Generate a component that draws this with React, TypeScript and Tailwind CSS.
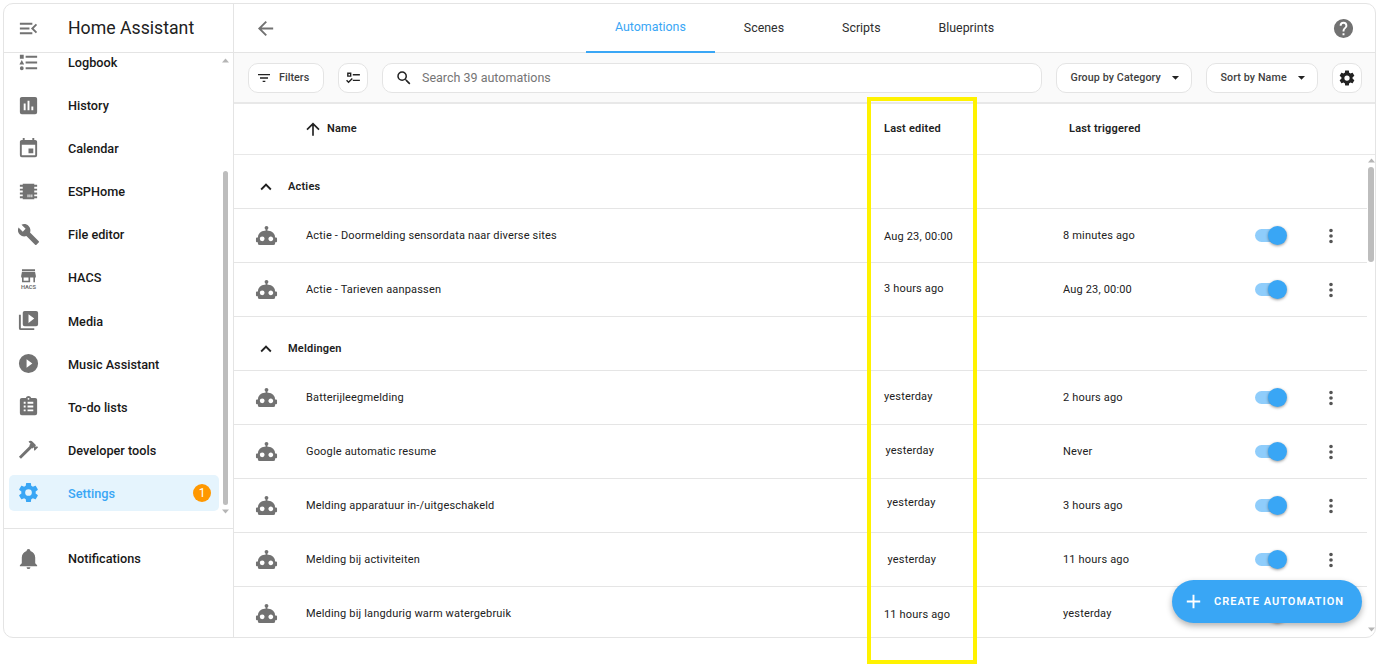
const mdi = {
  menuOpen: "M21,15.61L19.59,17L14.58,12L19.59,7L21,8.39L17.44,12L21,15.61M3,6H16V8H3V6M3,13V11H13V13H3M3,18V16H16V18H3Z",
  logbook: "M5,9.5L7.5,14H2.5L5,9.5M3,4H7V8H3V4M5,20A2,2 0 0,0 7,18A2,2 0 0,0 5,16A2,2 0 0,0 3,18A2,2 0 0,0 5,20M9,5V7H21V5H9M9,19H21V17H9V19M9,13H21V11H9V13Z",
  history: "M9 17H7V10H9V17M13 17H11V7H13V17M17 17H15V13H17V17M19 3H5C3.89 3 3 3.89 3 5V19A2 2 0 0 0 5 21H19A2 2 0 0 0 21 19V5A2 2 0 0 0 19 3Z",
  calendar: "M19,19H5V8H19M16,1V3H8V1H6V3H5C3.89,3 3,3.89 3,5V19A2,2 0 0,0 5,21H19A2,2 0 0,0 21,19V5C21,3.89 20.1,3 19,3H18V1M17,12H12V17H17V12Z",
  chip: "M6,4H18V5H21V7H18V9H21V11H18V13H21V15H18V17H21V19H18V20H6V19H3V17H6V15H3V13H6V11H3V9H6V7H3V5H6V4M11,15V18H12V15H11M13,15V18H14V15H13M15,15V18H16V15H15Z",
  wrench: "M22.7,19L13.6,9.9C14.5,7.6 14,4.9 12.1,3C10.1,1 7.1,0.6 4.7,1.7L9,6L6,9L1.6,4.7C0.4,7.1 0.9,10.1 2.9,12.1C4.8,14 7.5,14.5 9.8,13.6L18.9,22.7C19.3,23.1 19.9,23.1 20.3,22.7L22.6,20.4C23.1,20 23.1,19.3 22.7,19Z",
  store: "M12,18H6V14H12M21,14V12L20,7H4L3,12V14H4V20H14V14H18V20H20V14M20,4H4V6H20V4Z",
  media: "M4,6H2V20A2,2 0 0,0 4,22H18V20H4V6M20,2H8A2,2 0 0,0 6,4V16A2,2 0 0,0 8,18H20A2,2 0 0,0 22,16V4A2,2 0 0,0 20,2M12,14.5V5.5L18,10L12,14.5Z",
  play: "M10,16.5V7.5L16,12M12,2A10,10 0 0,0 2,12A10,10 0 0,0 12,22A10,10 0 0,0 22,12A10,10 0 0,0 12,2Z",
  todo: "M19,3H14.82C14.4,1.84 13.3,1 12,1C10.7,1 9.6,1.84 9.18,3H5A2,2 0 0,0 3,5V19A2,2 0 0,0 5,21H19A2,2 0 0,0 21,19V5A2,2 0 0,0 19,3M7,7H9V9H7V7M7,11H9V13H7V11M7,15H9V17H7V15M17,17H11V15H17V17M17,13H11V11H17V13M17,9H11V7H17V9M12,3A1,1 0 0,1 13,4A1,1 0 0,1 12,5A1,1 0 0,1 11,4A1,1 0 0,1 12,3Z",
  hammer: "M2 19.63L13.43 8.2L12.72 7.5L14.14 6.07L12 3.89C13.2 2.7 15.09 2.7 16.27 3.89L19.87 7.5L18.45 8.91H21.29L22 9.62L18.45 13.21L17.74 12.5V9.62L16.27 11.04L15.56 10.33L4.13 21.76L2 19.63Z",
  cog: "M12,15.5A3.5,3.5 0 0,1 8.5,12A3.5,3.5 0 0,1 12,8.5A3.5,3.5 0 0,1 15.5,12A3.5,3.5 0 0,1 12,15.5M19.43,12.97C19.47,12.65 19.5,12.33 19.5,12C19.5,11.67 19.47,11.34 19.43,11L21.54,9.37C21.73,9.22 21.78,8.95 21.66,8.73L19.66,5.27C19.54,5.05 19.27,4.96 19.05,5.05L16.56,6.05C16.04,5.66 15.5,5.32 14.87,5.07L14.5,2.42C14.46,2.18 14.25,2 14,2H10C9.75,2 9.54,2.18 9.5,2.42L9.13,5.07C8.5,5.32 7.96,5.66 7.44,6.05L4.95,5.05C4.73,4.96 4.46,5.05 4.34,5.27L2.34,8.73C2.21,8.95 2.27,9.22 2.46,9.37L4.57,11C4.53,11.34 4.5,11.67 4.5,12C4.5,12.33 4.53,12.65 4.57,12.97L2.46,14.63C2.27,14.78 2.21,15.05 2.34,15.27L4.34,18.73C4.46,18.95 4.73,19.03 4.95,18.95L7.44,17.94C7.96,18.34 8.5,18.68 9.13,18.93L9.5,21.58C9.54,21.82 9.75,22 10,22H14C14.25,22 14.46,21.82 14.5,21.58L14.87,18.93C15.5,18.67 16.04,18.34 16.56,17.94L19.05,18.95C19.27,19.03 19.54,18.95 19.66,18.73L21.66,15.27C21.78,15.05 21.73,14.78 21.54,14.63L19.43,12.97Z",
  bell: "M21,19V20H3V19L5,17V11C5,7.9 7.03,5.17 10,4.29C10,4.19 10,4.1 10,4A2,2 0 0,1 12,2A2,2 0 0,1 14,4C14,4.1 14,4.19 14,4.29C16.97,5.17 19,7.9 19,11V17L21,19M14,21A2,2 0 0,1 12,23A2,2 0 0,1 10,21",
  arrowLeft: "M20,11V13H8L13.5,18.5L12.08,19.92L4.16,12L12.08,4.08L13.5,5.5L8,11H20Z",
  help: "M15.07,11.25L14.17,12.17C13.45,12.89 13,13.5 13,15H11V14.5C11,13.39 11.45,12.39 12.17,11.67L13.41,10.41C13.78,10.05 14,9.55 14,9C14,7.89 13.1,7 12,7A2,2 0 0,0 10,9H8A4,4 0 0,1 12,5A4,4 0 0,1 16,9C16,9.88 15.64,10.67 15.07,11.25M13,19H11V17H13M12,2A10,10 0 0,0 2,12A10,10 0 0,0 12,22A10,10 0 0,0 22,12C22,6.47 17.5,2 12,2Z",
  filter: "M6,13H18V11H6M3,6V8H21V6M10,18H14V16H10V18Z",
  checks: "M3,5H9V11H3V5M5,7V9H7V7H5M11,7H21V9H11V7M11,15H21V17H11V15M5,20L1.5,16.5L2.91,15.09L5,17.17L9.59,12.59L11,14L5,20Z",
  search: "M9.5,3A6.5,6.5 0 0,1 16,9.5C16,11.11 15.41,12.59 14.44,13.73L14.71,14H15.5L20.5,19L19,20.5L14,15.5V14.71L13.73,14.44C12.59,15.41 11.11,16 9.5,16A6.5,6.5 0 0,1 3,9.5A6.5,6.5 0 0,1 9.5,3M9.5,5C7,5 5,7 5,9.5C5,12 7,14 9.5,14C12,14 14,12 14,9.5C14,7 12,5 9.5,5Z",
  caret: "M7,10L12,15L17,10H7Z",
  arrowUp: "M13,20H11V8L5.5,13.5L4.08,12.08L12,4.16L19.92,12.08L18.5,13.5L13,8V20Z",
  chevronUp: "M7.41,15.41L12,10.83L16.59,15.41L18,14L12,8L6,14L7.41,15.41Z",
  dots: "M12,16A2,2 0 0,1 14,18A2,2 0 0,1 12,20A2,2 0 0,1 10,18A2,2 0 0,1 12,16M12,10A2,2 0 0,1 14,12A2,2 0 0,1 12,14A2,2 0 0,1 10,12A2,2 0 0,1 12,10M12,4A2,2 0 0,1 14,6A2,2 0 0,1 12,8A2,2 0 0,1 10,6A2,2 0 0,1 12,4Z",
  plus: "M19,13H13V19H11V13H5V11H11V5H13V11H19V13Z",
  robot: "M12,2A2,2 0 0,1 14,4C14,4.74 13.6,5.39 13,5.73V7H14A7,7 0 0,1 21,14H22A1,1 0 0,1 23,15V18A1,1 0 0,1 22,19H21V20A2,2 0 0,1 19,22H5A2,2 0 0,1 3,20V19H2A1,1 0 0,1 1,18V15A1,1 0 0,1 2,14H3A7,7 0 0,1 10,7H11V5.73C10.4,5.39 10,4.74 10,4A2,2 0 0,1 12,2M7.5,13A2.5,2.5 0 0,0 5,15.5A2.5,2.5 0 0,0 7.5,18A2.5,2.5 0 0,0 10,15.5A2.5,2.5 0 0,0 7.5,13M16.5,13C15.12,13 14,14.12 14,15.5C14,16.88 15.12,18 16.5,18C17.88,18 19,16.88 19,15.5C19,14.12 17.88,13 16.5,13Z",
};

const Icon = ({ d, className }: { d: string; className: string }) => (
  <svg viewBox="0 0 24 24" fill="currentColor" className={`shrink-0 ${className}`}>
    <path d={d} fillRule="evenodd" />
  </svg>
);

const HacsIcon = () => (
  <svg viewBox="0 0 24 24" fill="currentColor" className="w-[23px] h-[23px] shrink-0 text-[#727272]">
    <path d={mdi.store} transform="translate(1.8 0) scale(0.85)" />
    <text x="12" y="23.5" textAnchor="middle" fontSize="6" fontWeight="700" fontFamily="Roboto, sans-serif">
      HACS
    </text>
  </svg>
);

const navItems = [
  { label: "Logbook", icon: mdi.logbook },
  { label: "History", icon: mdi.history },
  { label: "Calendar", icon: mdi.calendar },
  { label: "ESPHome", icon: mdi.chip },
  { label: "File editor", icon: mdi.wrench },
  { label: "HACS", icon: "" },
  { label: "Media", icon: mdi.media },
  { label: "Music Assistant", icon: mdi.play },
  { label: "To-do lists", icon: mdi.todo },
  { label: "Developer tools", icon: mdi.hammer },
];

type Row =
  | { group: string }
  | { name: string; edited: string; editedClass: string; triggered: string };

const rows: Row[] = [
  { group: "Acties" },
  { name: "Actie - Doormelding sensordata naar diverse sites", edited: "Aug 23, 00:00", editedClass: "pt-[4px]", triggered: "8 minutes ago" },
  { name: "Actie - Tarieven aanpassen", edited: "3 hours ago", editedClass: "", triggered: "Aug 23, 00:00" },
  { group: "Meldingen" },
  { name: "Batterijleegmelding", edited: "yesterday", editedClass: "", triggered: "2 hours ago" },
  { name: "Google automatic resume", edited: "yesterday", editedClass: "pl-[1.5px]", triggered: "Never" },
  { name: "Melding apparatuur in-/uitgeschakeld", edited: "yesterday", editedClass: "pl-[3px] pb-[4px]", triggered: "3 hours ago" },
  { name: "Melding bij activiteiten", edited: "yesterday", editedClass: "pl-[3.5px] pt-[2px]", triggered: "11 hours ago" },
  { name: "Melding bij langdurig warm watergebruik", edited: "11 hours ago", editedClass: "pt-[4px]", triggered: "yesterday" },
];

const ScrollArrow = ({ down }: { down?: boolean }) => (
  <svg viewBox="0 0 10 6" fill="currentColor" className={`w-[7px] h-[5px] shrink-0 text-[#b5b5b5] ${down ? "rotate-180" : ""}`}>
    <path d="M5 0L10 6H0Z" />
  </svg>
);

const ToolButton = ({ label, w }: { label: string; w: string }) => (
  <div className={`h-[30px] ${w} shrink-0 flex items-center pl-[13.5px] rounded-[10px] border border-[#e4e4e4] bg-white text-[10.7px] text-[#3f3f3f] font-medium tracking-[0.1px]`}>
    <span className="flex-1 pt-[2px]">{label}</span>
    <Icon d={mdi.caret} className="w-[17px] h-[17px] mr-[7px] text-[#222]" />
  </div>
);

const NavItem = ({ label, icon }: { label: string; icon: string }) => (
  <div className="h-[36px] flex items-center pl-[8px] gap-[28px] text-[12.7px] [font-weight:480] text-[#181818]">
    {icon ? <Icon d={icon} className="w-[23px] h-[23px] text-[#727272]" /> : <HacsIcon />}
    <span className="pt-[1px]">{label}</span>
  </div>
);

const Sidebar = () => (
  <aside className="w-[230px] shrink-0 flex flex-col border-r border-[#e4e4e4]">
    <div className="h-[49px] shrink-0 flex items-center pl-[13px] gap-[28px] border-b border-[#e4e4e4]">
      <Icon d={mdi.menuOpen} className="w-[23px] h-[23px] text-[#727272]" />
      <span className="text-[17.7px] text-[#212121]">Home Assistant</span>
    </div>
    <div className="h-[476px] shrink-0 flex border-b border-[#e4e4e4] overflow-hidden">
      <div className="w-[215px] shrink-0 pl-[5px]">
        <div className="-mt-[9px] flex flex-col gap-[7.1px]">
          {navItems.map((item) => (
            <NavItem key={item.label} {...item} />
          ))}
          <div className="h-[36px] flex items-center pl-[8px] pr-[8px] gap-[28px] rounded-[5px] bg-[#e5f4fd] text-[12.7px] [font-weight:480] text-[#39a6f5]">
            <Icon d={mdi.cog} className="w-[23px] h-[23px]" />
            <span className="flex-1 pt-[1px]">Settings</span>
            <span className="w-[18px] h-[18px] rounded-full bg-[#ff9800] text-white text-[12px] font-normal flex items-center justify-center">1</span>
          </div>
        </div>
      </div>
      <div className="flex-1 flex flex-col items-center pt-[5px] pr-[1px]">
        <ScrollArrow />
        <div className="w-[5px] h-[334px] mt-[108px] rounded-full bg-[#bdbdbd]" />
        <div className="mt-[4px]">
          <ScrollArrow down />
        </div>
      </div>
    </div>
    <div className="pt-[11px] pl-[5px] text-[#181818]">
      <div className="h-[36px] flex items-center pl-[8px] gap-[28px] text-[12.7px] [font-weight:480]">
        <Icon d={mdi.bell} className="w-[23px] h-[23px] text-[#727272]" />
        <span className="pt-[1px]">Notifications</span>
      </div>
    </div>
  </aside>
);

const Toggle = () => (
  <div className="w-[32px] h-[19px] flex items-center relative">
    <div className="w-[28px] h-[13px] rounded-full bg-[#8fcdfb]" />
    <div className="absolute right-0 top-0 w-[19px] h-[19px] rounded-full bg-[#39a6f5] shadow-[0_1px_3px_rgba(0,0,0,0.4)]" />
  </div>
);

const TableRows = () => (
  <div className="flex-1 min-w-0">
    {rows.map((row) =>
      "group" in row ? (
        <div key={row.group} className="h-[54px] flex items-center pt-[11px] pl-[21px] gap-[11px] border-b border-[#e5e5e5] text-[11px] font-semibold tracking-[0.2px] text-[#212121]">
          <Icon d={mdi.chevronUp} className="w-[22px] h-[22px] text-[#222]" />
          <span className="pt-[1px]">{row.group}</span>
        </div>
      ) : (
        <div key={row.name} className="h-[54px] grid grid-cols-[72px_578px_179px_192px_1fr] items-center border-b border-[#e5e5e5] text-[11px] tracking-[0.17px] text-[#212121]">
          <div className="pl-[21px]">
            <Icon d={mdi.robot} className="w-[23px] h-[23px] text-[#727272]" />
          </div>
          <span className="pt-[2px]">{row.name}</span>
          <span className={row.editedClass}>{row.edited}</span>
          <span className="pt-[2px]">{row.triggered}</span>
          <div className="flex items-center">
            <Toggle />
            <Icon d={mdi.dots} className="w-[22px] h-[22px] ml-[33px] text-[#555]" />
          </div>
        </div>
      )
    )}
  </div>
);

const Main = () => (
  <main className="flex-1 min-w-0 flex flex-col">
    <div className="h-[49px] shrink-0 flex items-center pl-[20px] pr-[20px] border-b border-[#e4e4e4]">
      <Icon d={mdi.arrowLeft} className="w-[23px] h-[23px] text-[#727272]" />
      <div className="ml-[309px] h-[49px] flex text-[12.4px] [font-weight:450] text-[#2e2e2e]">
        <div className="h-[49px] -mb-px px-[29px] flex items-center border-b-[2px] border-[#39a6f5] text-[#39a6f5]">Automations</div>
        <div className="px-[29px] flex items-center">Scenes</div>
        <div className="px-[29px] flex items-center">Scripts</div>
        <div className="px-[29px] flex items-center">Blueprints</div>
      </div>
      <Icon d={mdi.help} className="ml-auto w-[23px] h-[23px] text-[#727272]" />
    </div>
    <div className="h-[51px] shrink-0 flex items-center gap-[14px] pl-[14px] pr-[13px] bg-[#fafafa] border-b-2 border-[#e8e8e8]">
      <div className="h-[30px] w-[76px] shrink-0 flex items-center pl-[7px] gap-[7px] rounded-[10px] border border-[#e4e4e4] bg-white text-[10.8px] font-medium text-[#3f3f3f]">
        <Icon d={mdi.filter} className="w-[16px] h-[16px] text-[#222]" />
        <span className="pt-[2px]">Filters</span>
      </div>
      <div className="h-[30px] w-[30px] shrink-0 flex items-center justify-center rounded-[10px] border border-[#e4e4e4] bg-white">
        <Icon d={mdi.checks} className="w-[17px] h-[17px] text-[#222]" />
      </div>
      <div className="h-[30px] flex-1 flex items-center pl-[12px] gap-[9px] rounded-[10px] border border-[#e4e4e4] bg-white text-[12.5px] text-[#757575]">
        <Icon d={mdi.search} className="w-[18px] h-[18px] text-[#222]" />
        <span className="pt-[2px]">Search 39 automations</span>
      </div>
      <ToolButton label="Group by Category" w="w-[136px]" />
      <ToolButton label="Sort by Name" w="w-[112px]" />
      <div className="h-[30px] w-[30px] shrink-0 flex items-center justify-center rounded-[10px] border border-[#e4e4e4] bg-white">
        <Icon d={mdi.cog} className="w-[18px] h-[18px] text-[#222]" />
      </div>
    </div>
    <div className="h-[51px] shrink-0 grid grid-cols-[69px_581px_185px_1fr] items-center border-b border-[#e8e8e8] text-[11px] font-semibold tracking-[0.2px] text-[#212121]">
      <span />
      <div className="flex items-center gap-[4px]">
        <Icon d={mdi.arrowUp} className="w-[20px] h-[20px] text-[#222]" />
        Name
      </div>
      <span>Last edited</span>
      <span>Last triggered</span>
    </div>
    <div className="flex-1 min-h-0 flex overflow-hidden">
      <TableRows />
      <div className="w-[8px] shrink-0 flex flex-col items-center pt-[3px]">
        <ScrollArrow />
        <div className="w-[6px] h-[95px] mt-[4px] rounded-full bg-[#bdbdbd]" />
        <div className="mt-auto mb-[5px]">
          <ScrollArrow down />
        </div>
      </div>
    </div>
  </main>
);

export default function App() {
  return (
    <div className="relative w-[1380px] h-[672px] bg-white pl-[3px] pt-[3px] overflow-hidden [font-family:Roboto,sans-serif]">
      <div className="w-[1373px] h-[635px] flex rounded-[10px] border border-[#e4e4e4] overflow-hidden bg-white">
        <Sidebar />
        <Main />
      </div>
      <div className="absolute left-[1172px] top-[580px] h-[43px] w-[190px] rounded-full bg-[#39a6f5] flex items-center pl-[10px] gap-[9px] text-white text-[11px] font-semibold tracking-[1px] shadow-[0_3px_6px_rgba(0,0,0,0.3)]">
        <Icon d={mdi.plus} className="w-[23px] h-[23px]" />
        <span className="pt-[2px]">CREATE AUTOMATION</span>
      </div>
      <div className="absolute left-[867px] top-[97px] w-[110px] h-[567px] border-[4px] border-[#fff200]" />
    </div>
  );
}
